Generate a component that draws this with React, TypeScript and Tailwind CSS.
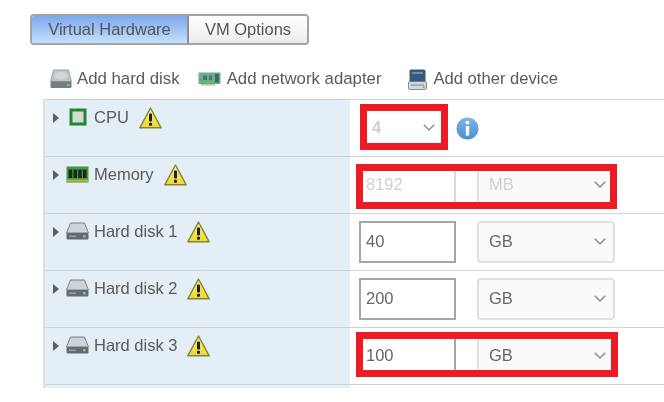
import React from "react";

const Warn = () => (
  <svg width="23" height="22" viewBox="0 0 23 22" className="shrink-0">
    <defs>
      <linearGradient id="warnFill" x1="0" y1="0" x2="0" y2="1">
        <stop offset="0" stopColor="#f8ee7a" />
        <stop offset="1" stopColor="#ecd92e" />
      </linearGradient>
    </defs>
    <path d="M11.5 1 L22.2 20.8 H0.8 Z" fill="url(#warnFill)" stroke="#85803a" strokeWidth="1.4" strokeLinejoin="round" />
    <rect x="10" y="6.5" width="3" height="8" rx="1" fill="#1f1f1f" />
    <rect x="10" y="15.8" width="3" height="3" rx="0.8" fill="#1f1f1f" />
  </svg>
);

const Arrow = () => (
  <svg width="6" height="10" viewBox="0 0 6 10" className="shrink-0">
    <path d="M0 0 L6 5 L0 10 Z" fill="#5f5f5f" />
  </svg>
);

const Cpu = () => (
  <svg width="18" height="18" viewBox="0 0 18 18" className="ml-[3px] shrink-0">
    <rect x="0.5" y="0.5" width="17" height="17" fill="#1b8a2c" />
    <rect x="3.5" y="3.5" width="11" height="11" fill="#d8d8d4" />
  </svg>
);

const Ram = () => (
  <svg width="23" height="17" viewBox="0 0 23 17" className="shrink-0">
    <rect x="0.5" y="0.5" width="22" height="16" fill="#3d9a3f" />
    <rect x="2.6" y="3.5" width="3.6" height="8.5" fill="#1c2a1c" />
    <rect x="7.4" y="3.5" width="3.6" height="8.5" fill="#1c2a1c" />
    <rect x="12.2" y="3.5" width="3.6" height="8.5" fill="#1c2a1c" />
    <rect x="17" y="3.5" width="3.6" height="8.5" fill="#1c2a1c" />
    <rect x="1" y="13.6" width="21" height="2" fill="#c9b23c" />
  </svg>
);

const Disk = () => (
  <svg width="23" height="18" viewBox="0 0 23 18" className="shrink-0">
    <path d="M4.5 1 H18.5 L22.5 11 H0.5 Z" fill="#cdd3d7" stroke="#6f767c" strokeWidth="0.9" />
    <rect x="0.5" y="11" width="22" height="6.5" rx="1" fill="#636b72" />
    <rect x="17" y="13" width="2.6" height="2.4" fill="#7fd05a" />
    <rect x="3" y="13.6" width="7" height="1.2" fill="#a9b0b5" />
  </svg>
);

const BigDisk = () => (
  <svg width="22" height="20" viewBox="0 0 22 20" className="shrink-0">
    <path d="M3.5 1 H18.5 L21.5 12.5 H0.5 Z" fill="#bfc6cb" stroke="#8a9196" strokeWidth="0.8" />
    <ellipse cx="11" cy="6.8" rx="6.5" ry="3.8" fill="#d2d7da" />
    <rect x="0.5" y="12.5" width="21" height="6.5" rx="1.2" fill="#767e84" />
    <rect x="17" y="15" width="2.4" height="2" fill="#7fd05a" />
  </svg>
);

const Nic = () => (
  <svg width="23" height="14" viewBox="0 0 23 14" className="shrink-0">
    <rect x="0.5" y="0.5" width="22" height="11.5" fill="#68b184" />
    <rect x="5" y="3.5" width="4" height="4.5" fill="#56707a" />
    <rect x="11" y="3.5" width="3" height="4.5" fill="#56707a" />
    <rect x="17" y="2" width="4" height="8.5" fill="#46675b" />
    <rect x="3" y="12" width="14" height="1.5" fill="#b7c98a" />
  </svg>
);

const Device = () => (
  <svg width="19" height="21" viewBox="0 0 19 21" className="shrink-0">
    <rect x="1.5" y="0.5" width="16" height="12.5" rx="1.5" fill="#33597c" />
    <rect x="4" y="3" width="11" height="2" fill="#6d8ca8" />
    <rect x="0.5" y="12.5" width="18" height="8" rx="1.5" fill="#d5d8da" stroke="#71777c" strokeWidth="0.8" />
    <rect x="3" y="15.5" width="13" height="1.2" fill="#8b9298" />
    <rect x="14.8" y="17.5" width="2" height="1.6" fill="#6fc256" />
  </svg>
);

const Info = () => (
  <svg width="23" height="23" viewBox="0 0 23 23" className="shrink-0">
    <defs>
      <linearGradient id="infoFill" x1="0" y1="0" x2="0" y2="1">
        <stop offset="0" stopColor="#7db6e8" />
        <stop offset="1" stopColor="#4a8fd2" />
      </linearGradient>
    </defs>
    <circle cx="11.5" cy="11.5" r="11" fill="url(#infoFill)" />
    <circle cx="11.5" cy="5.6" r="1.9" fill="#fff" />
    <rect x="9.8" y="9" width="3.4" height="9.6" fill="#fff" />
  </svg>
);

const Chevron = () => (
  <svg width="12" height="7" viewBox="0 0 12 7" className="shrink-0">
    <path d="M0.8 0.8 L6 6 L11.2 0.8" fill="none" stroke="#8a8a8a" strokeWidth="1.4" />
  </svg>
);

const Select = ({ value, faded }: { value: string; faded?: boolean }) => (
  <div className="ml-[21px] flex h-[42px] w-[138px] items-center justify-between rounded-[4px] border-2 border-[#e0e0e0] bg-[#fafafa] pb-[1px] pl-[10px] pr-[7px]">
    <span className={faded ? "text-[#d0d0d0]" : "text-[#666666]"}>{value}</span>
    <Chevron />
  </div>
);

const Input = ({ value, faded }: { value: string; faded?: boolean }) => (
  <div className={`flex h-[42px] w-[97px] items-center border-2 bg-white pb-[1px] pl-[5px] ${faded ? "border-[#dadada] text-[#d0d0d0]" : "border-[#a6a6a6] text-[#666666]"}`}>
    {value}
  </div>
);

const Row = ({ icon, label, children }: { icon: React.ReactNode; label: string; children: React.ReactNode }) => (
  <div className="flex h-[57px] border-t border-[#d2d2d2]">
    <div className="flex w-[305px] items-start bg-[#e3eef6] pl-[8px] pt-[6px]">
      <div className="mt-[7px]"><Arrow /></div>
      <div className="ml-[7px] flex h-[22px] w-[28px] items-center">{icon}</div>
      <span className="whitespace-nowrap leading-[22px] text-[#5a5a5a]">{label}</span>
      <div className="ml-[10px] mt-[1px]"><Warn /></div>
    </div>
    <div className="relative flex flex-1 items-start pl-[9px] pt-[7px]">{children}</div>
  </div>
);

const RedBox = ({ className }: { className: string }) => (
  <div className={`pointer-events-none absolute border-[7px] border-[#ed1c24] ${className}`} />
);

export default function App() {
  return (
    <div className="h-[402px] w-[664px] overflow-hidden bg-white pt-[14px] text-[16.5px] blur-[0.5px] [font-family:'Liberation_Sans',Arial,sans-serif]">
      <div className="ml-[30px] flex h-[31px] w-[279px] overflow-hidden rounded-[4px] border-2 border-[#a3a3a3] text-[#555555]">
        <div className="flex w-[157px] items-center justify-center border-r-2 border-[#8a8f96] bg-gradient-to-b from-[#7ea8ee] to-[#c4e0fb]">
          Virtual Hardware
        </div>
        <div className="flex flex-1 items-center justify-center bg-gradient-to-b from-[#ffffff] to-[#ececec]">
          VM Options
        </div>
      </div>

      <div className="ml-[50px] mt-[24px] flex h-[20px] items-center text-[16.8px] text-[#5a5a5a]">
        <BigDisk />
        <span className="ml-[5px]">Add hard disk</span>
        <div className="ml-[18px]"><Nic /></div>
        <span className="ml-[6px]">Add network adapter</span>
        <div className="ml-[27px]"><Device /></div>
        <span className="ml-[6px] text-[16.6px]">Add other device</span>
      </div>

      <div className="ml-[43px] mt-[10px] border-l-2 border-[#e0e0e0]">
        <Row icon={<Cpu />} label="CPU">
          <div className="ml-[8px] mt-[4px] flex h-[32px] w-[74px] items-center justify-between pl-[5px] pr-[6px] text-[#d0d0d0]">
            <span className="font-bold">4</span>
            <Chevron />
          </div>
          <div className="ml-[15px] mt-[10px]"><Info /></div>
          <RedBox className="left-[10px] top-[4px] h-[46px] w-[88px]" />
        </Row>
        <Row icon={<Ram />} label="Memory">
          <Input value="8192" faded />
          <Select value="MB" faded />
          <RedBox className="left-[6px] top-[7px] h-[45px] w-[261px]" />
        </Row>
        <Row icon={<Disk />} label="Hard disk 1">
          <Input value="40" />
          <Select value="GB" />
        </Row>
        <Row icon={<Disk />} label="Hard disk 2">
          <Input value="200" />
          <Select value="GB" />
        </Row>
        <Row icon={<Disk />} label="Hard disk 3">
          <Input value="100" />
          <Select value="GB" />
          <RedBox className="left-[6px] top-[4px] h-[45px] w-[262px]" />
        </Row>
        <div className="border-t border-[#d2d2d2]">
          <div className="h-[3px] w-[305px] bg-[#e3eef6]" />
        </div>
      </div>
    </div>
  );
}
